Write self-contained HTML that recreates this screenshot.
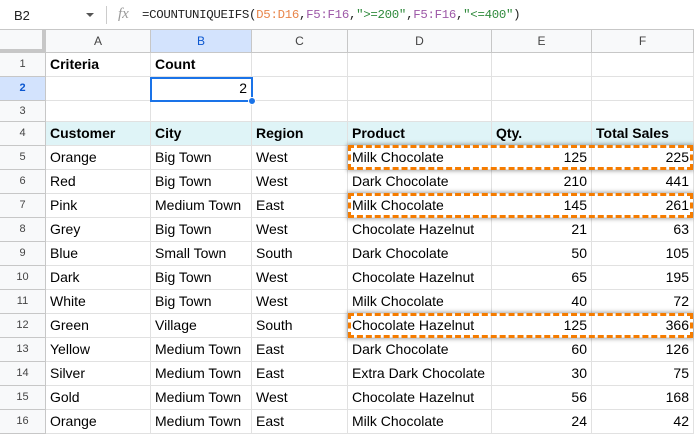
<!DOCTYPE html>
<html><head><style>
*{margin:0;padding:0;box-sizing:border-box}
body{width:694px;height:434px;overflow:hidden;background:#fff;font-family:"Liberation Sans",sans-serif;position:relative}
.fb{position:absolute;left:0;top:0;width:694px;height:30px;border-bottom:1px solid #c7c7c7;background:#fff}
.nm{position:absolute;left:14px;top:8px;font-size:13px;color:#222}
.ar{position:absolute;left:86px;top:13px;width:0;height:0;border-left:4px solid transparent;border-right:4px solid transparent;border-top:4px solid #555}
.sep{position:absolute;left:106px;top:6px;width:1px;height:18px;background:#ccc}
.fx{position:absolute;left:118px;top:6px;font-family:"Liberation Serif",serif;font-style:italic;font-size:15px;color:#999}
.fm{position:absolute;left:142px;top:8px;font-family:"Liberation Mono",monospace;font-size:12.4px;color:#222;letter-spacing:-0.3px}
.o{color:#e8854a}.p{color:#9e5aa8}.g{color:#2f8a3c}
.c{position:absolute;border-right:1px solid #e1e1e1;border-bottom:1px solid #e1e1e1;font-size:14px;color:#000;line-height:23px;padding:0 4px;white-space:nowrap;overflow:hidden}
.h{background:#f8f9fa;color:#444;font-size:11px;text-align:center;border-color:#c7c7c7}
.r{text-align:right}
.b{font-weight:bold}
.t{background:#dff4f7}
.hl{position:absolute;left:348px;width:345px;height:25px;border:3px dashed #f57c00;box-shadow:0 0 4px 1px rgba(0,0,0,.35)}
</style></head><body>
<div class="fb"><span class="nm">B2</span><span class="ar"></span><span class="sep"></span><span class="fx">fx</span>
<span class="fm">=COUNTUNIQUEIFS(<span class="o">D5:D16</span>,<span class="p">F5:F16</span>,<span class="g">"&gt;=200"</span>,<span class="p">F5:F16</span>,<span class="g">"&lt;=400"</span>)</span></div>
<div id="g"></div>
<script>
var xs=[0,46,151,252,348,492,592,694];
var ys=[30,53,77,101,122];for(var i=1;i<=12;i++)ys.push(122+24*i);
var data=[
["Criteria","Count","","","",""],
["","2","","","",""],
["","","","","",""],
["Customer","City","Region","Product","Qty.","Total Sales"],
["Orange","Big Town","West","Milk Chocolate","125","225"],
["Red","Big Town","West","Dark Chocolate","210","441"],
["Pink","Medium Town","East","Milk Chocolate","145","261"],
["Grey","Big Town","West","Chocolate Hazelnut","21","63"],
["Blue","Small Town","South","Dark Chocolate","50","105"],
["Dark","Big Town","West","Chocolate Hazelnut","65","195"],
["White","Big Town","West","Milk Chocolate","40","72"],
["Green","Village","South","Chocolate Hazelnut","125","366"],
["Yellow","Medium Town","East","Dark Chocolate","60","126"],
["Silver","Medium Town","East","Extra Dark Chocolate","30","75"],
["Gold","Medium Town","West","Chocolate Hazelnut","56","168"],
["Orange","Medium Town","East","Milk Chocolate","24","42"]];
var h="";
function cell(x,y,w,hh,cls,txt,st){h+='<div class="c '+cls+'" style="left:'+x+'px;top:'+y+'px;width:'+w+'px;height:'+hh+'px;line-height:'+(hh-1)+'px;'+(st||'')+'">'+txt+'</div>';}
var L="ABCDEF";
cell(0,30,46,23,"h","", "border-right:4px solid #c7c7c7;border-bottom:4px solid #c7c7c7");
for(var c=0;c<6;c++)cell(xs[c+1],30,xs[c+2]-xs[c+1],23,"h",L[c],c==1?"background:#d3e3fd;color:#0b57d0;font-size:12px":"font-size:12px");
for(var r=0;r<16;r++){var y=ys[r+1],hh=ys[r+2]-y;
cell(0,y,46,hh,"h",r+1,r==1?"background:#d3e3fd;color:#0b57d0;font-weight:bold":"");
for(var c=0;c<6;c++){var cls="";if(r==3)cls="b t";if(r==0)cls="b";if(r>3&&c>=4)cls="r";if(r==1&&c==1)cls="r";
cell(xs[c+1],y,xs[c+2]-xs[c+1],hh,cls,data[r][c]);}}
h+='<div style="position:absolute;left:150px;top:77px;width:103px;height:25px;border:2px solid #1a73e8"></div>';
h+='<div style="position:absolute;left:248px;top:97px;width:8px;height:8px;border-radius:50%;background:#1a73e8;border:1px solid #fff"></div>';
[146,194,314].forEach(function(y){h+='<div class="hl" style="top:'+(y-1)+'px"></div>';});
document.getElementById("g").innerHTML=h;
</script>
</body></html>
